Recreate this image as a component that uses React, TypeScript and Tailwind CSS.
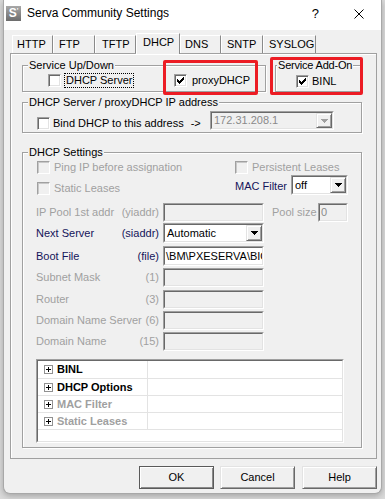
import React from "react";

function Check({ checked = false, disabled = false }: { checked?: boolean; disabled?: boolean }) {
  return (
    <span
      className={
        disabled
          ? "flex h-[13px] w-[13px] shrink-0 items-center justify-center border border-t-[#a0a0a0] border-l-[#a0a0a0] border-r-white border-b-white bg-[#f0f0f0] shadow-[inset_1px_1px_0_#c8c8c8]"
          : "flex h-[13px] w-[13px] shrink-0 items-center justify-center border border-t-[#a0a0a0] border-l-[#a0a0a0] border-r-white border-b-white bg-white shadow-[inset_1px_1px_0_#696969,inset_-1px_-1px_0_#e3e3e3]"
      }
    >
      {checked && (
        <svg width="7" height="7" viewBox="0 0 7 7" shapeRendering="crispEdges">
          <path
            d="M6 0h1v1h-1z M5 1h2v1h-2z M0 2h1v1h-1z M4 2h3v1h-3z M0 3h2v1h-2z M3 3h3v1h-3z M0 4h5v1h-5z M1 5h3v1h-3z M2 6h1v1h-1z"
            fill="#000"
          />
        </svg>
      )}
    </span>
  );
}

function Input({
  className,
  disabled = false,
  children,
}: {
  className: string;
  disabled?: boolean;
  children?: React.ReactNode;
}) {
  return (
    <div className={`${className} border border-t-[#a0a0a0] border-l-[#a0a0a0] border-r-white border-b-white`}>
      <div
        className={
          disabled
            ? "flex h-full items-center overflow-hidden whitespace-nowrap border border-t-[#696969] border-l-[#696969] border-r-[#e3e3e3] border-b-[#e3e3e3] bg-[#f0f0f0] pl-[1px] text-[#8a8a8a]"
            : "flex h-full items-center overflow-hidden whitespace-nowrap border border-t-[#696969] border-l-[#696969] border-r-[#e3e3e3] border-b-[#e3e3e3] bg-white pl-[1px] text-black"
        }
      >
        {children}
      </div>
    </div>
  );
}

function Arrow({ disabled = false }: { disabled?: boolean }) {
  return (
    <svg width="7" height="4" viewBox="0 0 7 4" shapeRendering="crispEdges">
      <path d="M0 0h7v1h-7z M1 1h5v1h-5z M2 2h3v1h-3z M3 3h1v1h-1z" fill={disabled ? "#a0a0a0" : "#000"} />
    </svg>
  );
}

function Combo({
  className,
  disabled = false,
  text,
}: {
  className: string;
  disabled?: boolean;
  text: string;
}) {
  return (
    <div className={`${className} border border-t-[#a0a0a0] border-l-[#a0a0a0] border-r-white border-b-white`}>
      <div
        className={
          disabled
            ? "flex h-full items-center border border-t-[#696969] border-l-[#696969] border-r-[#e3e3e3] border-b-[#e3e3e3] bg-[#f0f0f0] text-[#8a8a8a]"
            : "flex h-full items-center border border-t-[#696969] border-l-[#696969] border-r-[#e3e3e3] border-b-[#e3e3e3] bg-white text-black"
        }
      >
        <span className="flex-1 overflow-hidden whitespace-nowrap pl-[2px]">{text}</span>
        <span className="flex h-full w-[16px] shrink-0 items-center justify-center border border-t-[#e3e3e3] border-l-[#e3e3e3] border-r-[#696969] border-b-[#696969] bg-[#f0f0f0] shadow-[inset_1px_1px_0_#fff,inset_-1px_-1px_0_#a0a0a0]">
          <Arrow disabled={disabled} />
        </span>
      </div>
    </div>
  );
}

function Plus() {
  return (
    <span className="flex h-[9px] w-[9px] shrink-0 items-center justify-center border border-[#919191] bg-white">
      <svg width="5" height="5" viewBox="0 0 5 5" shapeRendering="crispEdges">
        <path d="M0 2h5v1h-5z M2 0h1v5h-1z" fill="#000" />
      </svg>
    </span>
  );
}

const groupCls =
  "flex flex-col border border-[#a0a0a0] shadow-[inset_1px_1px_0_#fff,1px_1px_0_#fff]";
const legendCls = "-mt-[7px] ml-[5px] self-start bg-[#f0f0f0] px-px leading-[13px]";

export default function App() {
  return (
    <div className="relative h-[499px] w-[385px] overflow-hidden bg-[#dadada] font-['Liberation_Sans',Arial,sans-serif] text-[11px] leading-[13px] text-black">
      <div className="ml-[3px] flex h-[494px] w-[379px] flex-col overflow-hidden rounded-b-[7px] border-x border-b border-[#a8a8a8] bg-[#f0f0f0] shadow-[0_2px_6px_rgba(0,0,0,0.25)]">
        {/* title bar */}
        <div className="flex h-[30px] shrink-0 items-center bg-white pb-[3px]">
          <div className="ml-[2px] flex h-[15px] w-[15px] items-start justify-center bg-gradient-to-b from-[#a8a8a8] to-[#6c6c6c] pt-[1px] text-[12px] font-bold leading-[12px] text-white">
            S<span className="text-[7px] leading-[7px]">'</span>
          </div>
          <span className="ml-[6px] text-[12px]">Serva Community Settings</span>
          <span className="ml-auto text-[13px]">?</span>
          <svg className="ml-[35px] mr-[17px]" width="10" height="10" viewBox="0 0 10 10">
            <path d="M0.5 0.5L9.5 9.5M9.5 0.5L0.5 9.5" stroke="#000" strokeWidth="1" />
          </svg>
        </div>

        {/* tabs */}
        <div className="ml-[8px] mt-[3px] flex h-[20px] items-end">
          <div className="h-[18px] w-[41px] border-l border-t border-r border-l-white border-t-white border-r-[#8a8a8a] pl-[4px] pt-[2px]">HTTP</div>
          <div className="h-[18px] w-[42px] border-l border-t border-r border-l-white border-t-white border-r-[#8a8a8a] pl-[5px] pt-[2px]">FTP</div>
          <div className="h-[18px] w-[41px] border-l border-t border-r border-l-white border-t-white border-r-[#8a8a8a] pl-[6px] pt-[2px]">TFTP</div>
          <div className="relative z-10 -mb-px h-[21px] w-[44px] border-l border-t border-r border-l-white border-t-white border-r-[#8a8a8a] bg-[#f0f0f0] pl-[6px] pt-[2px]">DHCP</div>
          <div className="h-[18px] w-[41px] border-l border-t border-r border-l-white border-t-white border-r-[#8a8a8a] pl-[4px] pt-[2px]">DNS</div>
          <div className="h-[18px] w-[42px] border-l border-t border-r border-l-white border-t-white border-r-[#8a8a8a] pl-[5px] pt-[2px]">SNTP</div>
          <div className="h-[18px] w-[53px] border-l border-t border-r border-l-white border-t-white border-r-[#8a8a8a] pl-[5px] pt-[2px]">SYSLOG</div>
        </div>

        {/* tab panel */}
        <div className="ml-[6px] flex h-[406px] w-[367px] flex-col border border-[#a0a0a0] pl-[11px] shadow-[inset_1px_1px_0_#fff]">
          {/* service groups */}
          <div className="mt-[11px] flex items-start">
            <div className={`${groupCls} h-[27px] w-[244px]`}>
              <div className={legendCls}>Service Up/Down</div>
              <div className="mt-[2px] flex h-[13px] items-center">
                <div className="ml-[25px] flex w-[126px] items-center">
                  <Check />
                  <span className="ml-[3px] border border-dotted border-black px-px leading-[13px]">DHCP Server</span>
                </div>
                <Check checked />
                <span className="ml-[5px]">proxyDHCP</span>
              </div>
            </div>
            <div className={`${groupCls} ml-[9px] h-[27px] w-[86px]`}>
              <div className="-mt-[7px] ml-[1px] self-start bg-[#f0f0f0] px-px leading-[13px] tracking-[-0.2px]">Service Add-On</div>
              <div className="ml-[20px] mt-[3px] flex items-center">
                <Check checked />
                <span className="ml-[3px]">BINL</span>
              </div>
            </div>
          </div>

          {/* bind address group */}
          <div className={`${groupCls} mt-[10px] h-[31px] w-[340px]`}>
            <div className={legendCls}>DHCP Server / proxyDHCP IP address</div>
            <div className="flex items-start">
              <div className="ml-[14px] mt-[8px] flex w-[173px] items-center">
                <Check />
                <span className="ml-[3px]">Bind DHCP to this address</span>
                <span className="ml-[7px]">-&gt;</span>
              </div>
              <Combo className="mt-[2px] h-[19px] w-[124px]" disabled text="172.31.208.1" />
            </div>
          </div>

          {/* DHCP settings group */}
          <div className={`${groupCls} mt-[19px] h-[296px] w-[340px]`}>
            <div className={legendCls}>DHCP Settings</div>

            <div className="mt-[2px] flex h-[13px] items-center">
              <div className="ml-[14px] flex w-[198px] items-center">
                <Check disabled />
                <span className="ml-[4px] text-[#a0a0a0]">Ping IP before assignation</span>
              </div>
              <Check disabled />
              <span className="ml-[4px] text-[#a0a0a0]">Persistent Leases</span>
            </div>

            <div className="mt-px flex h-[20px] items-start">
              <div className="ml-[14px] mt-[7px] flex w-[198px] items-center">
                <Check disabled />
                <span className="ml-[4px] text-[#a0a0a0]">Static Leases</span>
              </div>
              <div className="mt-[5px] w-[56px] text-[#14145a]">MAC Filter</div>
              <Combo className="h-[20px] w-[57px]" text="off" />
            </div>

            <div className="ml-[13px] mt-[8px] flex h-[19px] items-center">
              <div className="flex w-[123px] justify-between text-[#a0a0a0]">
                <span>IP Pool 1st addr</span>
                <span>(yiaddr)</span>
              </div>
              <Input className="ml-[4px] h-[19px] w-[101px]" disabled />
              <span className="ml-[8px] w-[46px] text-[#a0a0a0]">Pool size</span>
              <Input className="h-[19px] w-[30px]" disabled>
                0
              </Input>
            </div>

            <div className="ml-[13px] mt-px flex h-[20px] items-center">
              <div className="flex w-[123px] justify-between text-[#14145a]">
                <span>Next Server</span>
                <span>(siaddr)</span>
              </div>
              <Combo className="ml-[4px] h-[20px] w-[101px]" text="Automatic" />
            </div>

            <div className="ml-[13px] mt-[3px] flex h-[20px] items-center">
              <div className="flex w-[123px] justify-between text-[#14145a]">
                <span>Boot File</span>
                <span>(file)</span>
              </div>
              <Input className="ml-[4px] h-[20px] w-[101px]">\BM\PXESERVA\BIOS</Input>
            </div>

            <div className="ml-[13px] mt-[2px] flex h-[19px] items-center">
              <div className="flex w-[123px] justify-between text-[#a0a0a0]">
                <span>Subnet Mask</span>
                <span>(1)</span>
              </div>
              <Input className="ml-[4px] h-[19px] w-[101px]" disabled />
            </div>

            <div className="ml-[13px] mt-[3px] flex h-[19px] items-center">
              <div className="flex w-[123px] justify-between text-[#a0a0a0]">
                <span>Router</span>
                <span>(3)</span>
              </div>
              <Input className="ml-[4px] h-[19px] w-[101px]" disabled />
            </div>

            <div className="ml-[13px] mt-[2px] flex h-[19px] items-center">
              <div className="flex w-[123px] justify-between text-[#a0a0a0]">
                <span>Domain Name Server</span>
                <span>(6)</span>
              </div>
              <Input className="ml-[4px] h-[19px] w-[101px]" disabled />
            </div>

            <div className="ml-[13px] mt-[2px] flex h-[19px] items-center">
              <div className="flex w-[123px] justify-between text-[#a0a0a0]">
                <span>Domain Name</span>
                <span>(15)</span>
              </div>
              <Input className="ml-[4px] h-[19px] w-[101px]" disabled />
            </div>

            {/* tree list */}
            <div className="ml-[13px] mt-[8px] h-[84px] w-[308px] border border-t-[#a0a0a0] border-l-[#a0a0a0] border-r-white border-b-white">
              <div className="flex h-full flex-col border border-t-[#696969] border-l-[#696969] border-r-[#e3e3e3] border-b-[#e3e3e3] bg-white font-bold">
                <div className="flex h-[18px] shrink-0 border-b border-[#e3e3e3]">
                  <div className="flex w-[110px] items-center border-r border-[#e3e3e3] pl-[6px]">
                    <Plus />
                    <span className="ml-[4px] text-black">BINL</span>
                  </div>
                </div>
                <div className="flex h-[17px] shrink-0 border-b border-[#e3e3e3]">
                  <div className="flex w-[110px] items-center border-r border-[#e3e3e3] pl-[6px]">
                    <Plus />
                    <span className="ml-[4px] text-black">DHCP Options</span>
                  </div>
                </div>
                <div className="flex h-[17px] shrink-0 border-b border-[#e3e3e3]">
                  <div className="flex w-[110px] items-center border-r border-[#e3e3e3] pl-[6px]">
                    <Plus />
                    <span className="ml-[4px] text-[#a0a0a0]">MAC Filter</span>
                  </div>
                </div>
                <div className="flex h-[17px] shrink-0 border-b border-[#e3e3e3]">
                  <div className="flex w-[110px] items-center border-r border-[#e3e3e3] pl-[6px]">
                    <Plus />
                    <span className="ml-[4px] text-[#a0a0a0]">Static Leases</span>
                  </div>
                </div>
              </div>
            </div>
          </div>
        </div>

        {/* buttons */}
        <div className="ml-[135px] mt-[7px] flex">
          <button className="h-[23px] w-[75px] border border-[#5a5a5a] bg-[#f0f0f0] shadow-[inset_1px_1px_0_#fff,inset_-1px_-1px_0_#8a8a8a]">
            OK
          </button>
          <button className="ml-[6px] h-[23px] w-[75px] border border-t-[#e3e3e3] border-l-[#e3e3e3] border-r-[#696969] border-b-[#696969] bg-[#f0f0f0] shadow-[inset_1px_1px_0_#fff,inset_-1px_-1px_0_#a0a0a0]">
            Cancel
          </button>
          <button className="ml-[7px] h-[23px] w-[75px] border border-t-[#e3e3e3] border-l-[#e3e3e3] border-r-[#696969] border-b-[#696969] bg-[#f0f0f0] shadow-[inset_1px_1px_0_#fff,inset_-1px_-1px_0_#a0a0a0]">
            Help
          </button>
        </div>
      </div>

      {/* red annotation boxes */}
      <div className="absolute left-[163px] top-[60px] h-[35px] w-[95px] rounded-[2px] border-[3px] border-[#ec1c24]" />
      <div className="absolute left-[270px] top-[57px] h-[38px] w-[93px] rounded-[2px] border-[3px] border-[#ec1c24]" />
    </div>
  );
}
